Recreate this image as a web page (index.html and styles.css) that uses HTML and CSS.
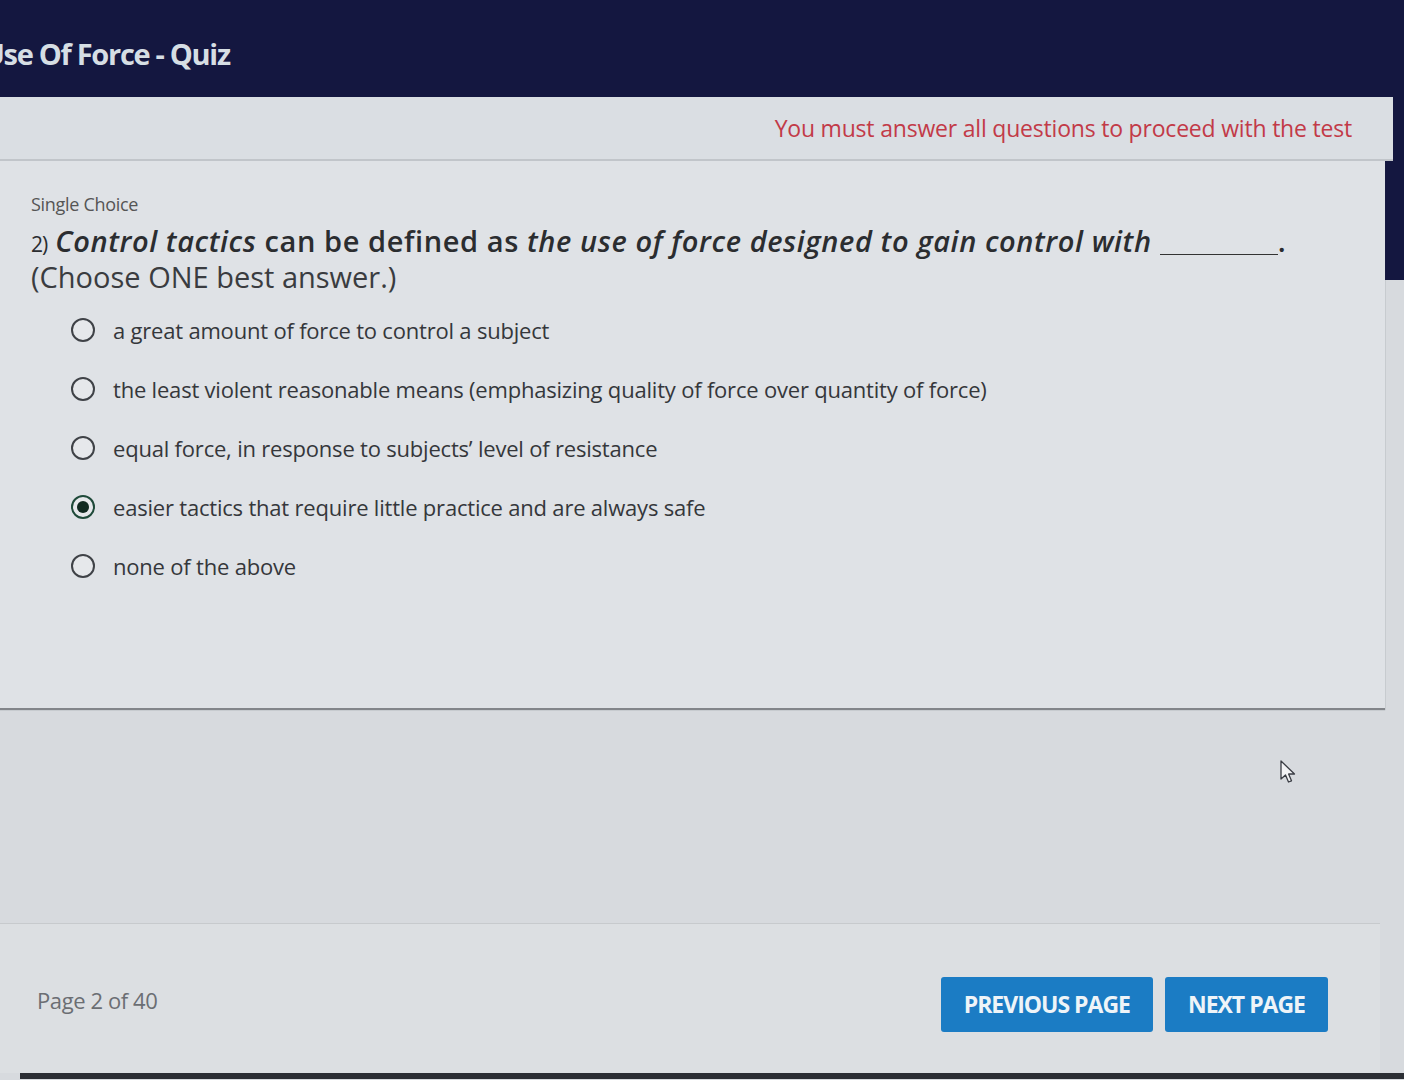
FILE: index.html
```html
<!DOCTYPE html>
<html lang="en">

<head>
    <meta charset="UTF-8">
    <meta name="viewport" content="width=device-width, initial-scale=1.0">
    <title>Use Of Force - Quiz</title>
    <link rel="stylesheet" href="styles.css">
</head>

<body>
    <!-- top bar -->
    <header class="top-bar">
        <h1 class="quiz-title">Use Of Force - Quiz</h1>
    </header>

    <main class="quiz">
        <!-- notice -->
        <div class="notice">You must answer all questions to proceed with the test</div>

        <!-- question -->
        <section class="question-card">
            <p class="question-type">Single Choice</p>
            <h2 class="question-text"><span class="q-num">2)</span> <em>Control tactics</em> can be defined as <em>the use of force designed to gain control with</em> <span class="blank"></span>.</h2>
            <p class="question-hint">(Choose ONE best answer.)</p>

            <ul class="options">
                <li><label><input type="radio" name="q2"> a great amount of force to control a subject</label></li>
                <li><label><input type="radio" name="q2"> the least violent reasonable means (emphasizing quality of force over quantity of force)</label></li>
                <li><label><input type="radio" name="q2"> equal force, in response to subjects’ level of resistance</label></li>
                <li><label><input type="radio" name="q2" checked> easier tactics that require little practice and are always safe</label></li>
                <li><label><input type="radio" name="q2"> none of the above</label></li>
            </ul>
        </section>

        <!-- pager -->
        <footer class="pager">
            <span class="page-count">Page 2 of 40</span>
            <div class="pager-buttons">
                <button class="pager-btn">Previous Page</button>
                <button class="pager-btn">Next Page</button>
            </div>
        </footer>
        <div class="taskbar"></div>
    </main>

    <!-- mouse pointer -->
    <svg class="pointer" width="18" height="26" viewBox="0 0 18 26">
        <path d="M2 2 L2 20 L6.5 16 L9.5 23 L12.5 21.8 L9.6 15 L15.5 15 Z" fill="#f2f3f5" stroke="#3a3d44" stroke-width="1.3" stroke-linejoin="round" />
    </svg>
</body>

</html>
```

FILE: styles.css
```css
/* page */
body {
    margin: 0;
    font-family: "Open Sans", "Liberation Sans", sans-serif;
    color: #333;
    background: linear-gradient(#141740 0, #141740 280px, #d7dade 280px);
    position: relative;
    min-height: 1080px;
    overflow: hidden;
}

/* top bar */
.top-bar {
    height: 92px;
    display: flex;
    align-items: center;
}

.quiz-title {
    margin: 14px 0 0 -17px;
    font-size: 29px;
    font-weight: 700;
    letter-spacing: -1.3px;
    color: #d6dee4;
}

/* notice */
.notice {
    width: 1393px;
    box-sizing: border-box;
    margin-top: 5px;
    height: 64px;
    padding-right: 41px;
    display: flex;
    align-items: center;
    justify-content: flex-end;
    background-color: #dadee3;
    border-bottom: 2px solid #c1c5ca;
    color: #c23a48;
    font-size: 23px;
    letter-spacing: -0.2px;
}

/* question card */
.question-card {
    width: 1385px;
    height: 547px;
    box-sizing: border-box;
    padding: 31px 0 0 31px;
    background-color: #dfe2e6;
    box-shadow: 0 2px 1px rgba(60, 64, 70, 0.55);
}

.question-type {
    margin: 0;
    font-size: 18px;
    line-height: 24px;
    color: #555;
    letter-spacing: -0.3px;
}

.question-text {
    margin: 7px 0 0;
    font-size: 29px;
    line-height: 36px;
    font-weight: 600;
    color: #2b2d30;
    letter-spacing: 0.58px;
}

.q-num {
    font-size: 21px;
    font-weight: 400;
    letter-spacing: -1px;
}

.question-text em {
    font-style: italic;
}

.blank {
    display: inline-block;
    width: 118px;
    border-bottom: 1.5px solid #333;
    vertical-align: -3px;
}

.question-hint {
    margin: -3px 0 0;
    font-size: 29px;
    line-height: 36px;
    color: #3a3c40;
}

/* answers */
.options {
    list-style: none;
    margin: 5px 0 0 40px;
    padding: 0;
}

.options li {
    height: 59px;
    display: flex;
    align-items: center;
}

.options label {
    display: flex;
    align-items: center;
    gap: 18px;
    font-size: 22px;
    color: #35373b;
    letter-spacing: -0.2px;
    cursor: pointer;
}

.options input[type="radio"] {
    appearance: none;
    -webkit-appearance: none;
    margin: 0;
    width: 24px;
    height: 24px;
    border: 2.5px solid #3f4247;
    border-radius: 50%;
    box-sizing: border-box;
    background-color: #e6e8eb;
    display: grid;
    place-content: center;
}

.options input[type="radio"]:checked {
    border-color: #1f4a3a;
}

.options input[type="radio"]:checked::after {
    content: "";
    width: 12px;
    height: 12px;
    border-radius: 50%;
    background-color: #112a20;
}

/* pager */
.pager {
    width: 1380px;
    height: 150px;
    box-sizing: border-box;
    margin-top: 215px;
    padding: 6px 52px 0 37px;
    display: flex;
    align-items: center;
    justify-content: space-between;
    background-color: #dcdfe2;
    border-top: 1px solid #c7cacd;
}

.page-count {
    font-size: 22px;
    color: #6b6e73;
    letter-spacing: -0.4px;
    margin-bottom: 4px;
}

.pager-buttons {
    display: flex;
    gap: 12px;
    margin-top: 5px;
}

.pager-btn {
    height: 55px;
    padding: 0 23px;
    background-color: #1b7cc4;
    color: #eef4f8;
    border: none;
    border-radius: 3px;
    font-family: "Open Sans", "Liberation Sans", sans-serif;
    font-size: 23px;
    font-weight: 700;
    letter-spacing: -1px;
    text-transform: uppercase;
    cursor: pointer;
}

.taskbar {
    height: 6px;
    margin-left: 20px;
    background-color: #2b2e34;
}

/* mouse pointer */
.pointer {
    position: absolute;
    left: 1279px;
    top: 759px;
}
```
